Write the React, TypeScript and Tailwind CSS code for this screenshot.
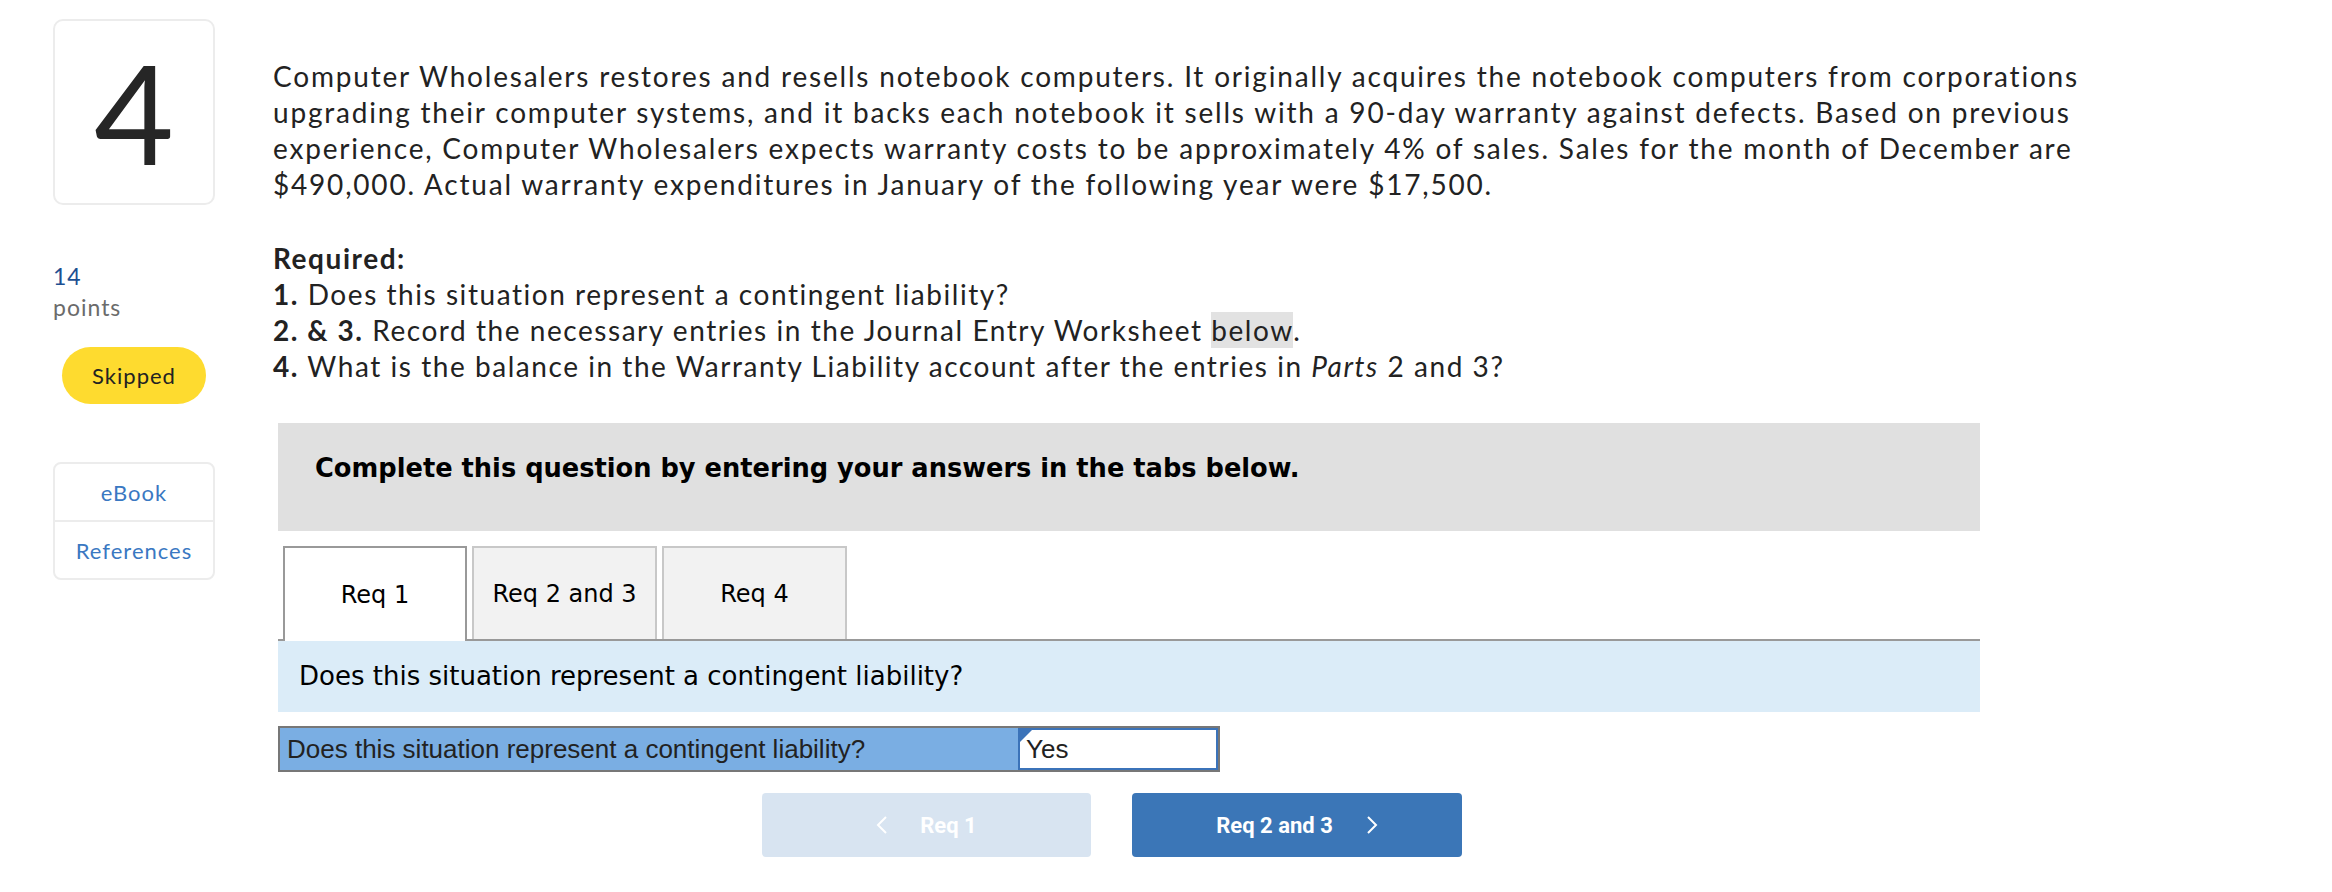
import React from 'react'

const tabs = ['Req 1', 'Req 2 and 3', 'Req 4']

function Chevron({ dir, className }: { dir: 'left' | 'right'; className?: string }) {
  return (
    <svg width="12" height="20" viewBox="0 0 12 20" className={className}>
      <polyline
        points={dir === 'right' ? '2,2 10,10 2,18' : '10,2 2,10 10,18'}
        fill="none"
        stroke="currentColor"
        strokeWidth="2"
      />
    </svg>
  )
}

export default function App() {
  return (
    <div className="flex w-[2332px] h-[892px] overflow-hidden bg-white pl-[53px] pt-[19px] font-['Lato',sans-serif] tracking-[1px] text-[#222]">
      {/* Left rail */}
      <div className="w-[162px] shrink-0 flex flex-col">
        <div className="h-[186px] rounded-[10px] border-2 border-[#ececec] flex items-center justify-center text-[138px] leading-none tracking-normal text-[#262626]">
          4
        </div>
        <div className="mt-[56px] text-[23px] leading-[31px] text-[#1d4f91]">14</div>
        <div className="text-[23px] leading-[31px] text-[#6b6b6b]">points</div>
        <div className="mt-[24px] ml-[9px] w-[144px] h-[57px] rounded-full bg-[#fedb2f] flex items-center justify-center text-[22px] text-[#222]">
          Skipped
        </div>
        <div className="mt-[58px] rounded-[8px] border-2 border-[#ececec] flex flex-col text-[22px] text-[#3a78c2]">
          <div className="h-[58px] flex items-center justify-center border-b-2 border-[#ececec]">eBook</div>
          <div className="h-[56px] flex items-center justify-center">References</div>
        </div>
      </div>

      {/* Main column */}
      <div className="ml-[58px] pt-[39px] flex flex-col">
        <p className="text-[28px] leading-[36px] tracking-[1.8px] whitespace-nowrap">
          Computer Wholesalers restores and resells notebook computers. It originally acquires the notebook computers from corporations
          <br />
          upgrading their computer systems, and it backs each notebook it sells with a 90-day warranty against defects. Based on previous
          <br />
          experience, Computer Wholesalers expects warranty costs to be approximately 4% of sales. Sales for the month of December are
          <br />
          $490,000. Actual warranty expenditures in January of the following year were $17,500.
        </p>

        <div className="mt-[38px] text-[28px] leading-[36px] tracking-[1.55px] whitespace-nowrap">
          <div className="font-bold">Required:</div>
          <div>
            <span className="font-bold">1.</span> Does this situation represent a contingent liability?
          </div>
          <div>
            <span className="font-bold">2. &amp; 3.</span> Record the necessary entries in the Journal Entry Worksheet{' '}
            <span className="bg-[#e2e2e2] py-[1px]">below</span>.
          </div>
          <div>
            <span className="font-bold">4.</span> What is the balance in the Warranty Liability account after the entries in{' '}
            <i>Parts</i> 2 and 3?
          </div>
        </div>

        {/* Tabbed worksheet */}
        <div className="ml-[5px] mt-[39px] w-[1702px] font-['DejaVu_Sans',Verdana,sans-serif] tracking-normal text-black">
          <div className="h-[108px] bg-[#e0e0e0] pl-[37px] pt-[29px]">
            <div className="text-[25.7px] leading-[32px] font-bold whitespace-nowrap">
              Complete this question by entering your answers in the tabs below.
            </div>
          </div>

          <div className="mt-[15px] flex items-end gap-[5px] pl-[5px] border-b-2 border-[#999]">
            {tabs.map((t, i) => (
              <div
                key={t}
                className={
                  i === 0
                    ? 'w-[184px] h-[95px] -mb-[2px] border-2 border-b-0 border-[#999] bg-white flex items-center justify-center text-[24px]'
                    : 'w-[185px] h-[93px] border-2 border-b-0 border-[#c8c8c8] bg-[#f2f2f2] flex items-center justify-center text-[24px]'
                }
              >
                {t}
              </div>
            ))}
          </div>

          <div className="h-[71px] bg-[#dbecf8] pl-[21px] flex items-center text-[26px]">
            Does this situation represent a contingent liability?
          </div>

          <div className="mt-[14px] w-[942px] h-[46px] border-2 border-[#777] flex font-['Liberation_Sans',Arial,sans-serif] text-[26px] text-[#222]">
            <div className="w-[738px] bg-[#7aaee3] flex items-center pl-[7px]">
              Does this situation represent a contingent liability?
            </div>
            <div className="relative flex-1 bg-white border-2 border-[#3b73b9] flex items-center pl-[6px]">
              <span className="absolute left-0 top-0 w-0 h-0 border-t-[12px] border-t-[#3b73b9] border-r-[12px] border-r-transparent" />
              Yes
            </div>
          </div>

          <div className="mt-[21px] ml-[484px] flex gap-[41px] font-['Roboto',sans-serif] font-bold text-[22px] text-white">
            <div className="w-[329px] h-[64px] rounded-[4px] bg-[#d8e4f1] flex items-center justify-center gap-[32px]">
              <Chevron dir="left" />
              <span>Req 1</span>
            </div>
            <div className="w-[330px] h-[64px] rounded-[4px] bg-[#3b76b7] flex items-center justify-center gap-[33px]">
              <span>Req 2 and 3</span>
              <Chevron dir="right" />
            </div>
          </div>
        </div>
      </div>
    </div>
  )
}
